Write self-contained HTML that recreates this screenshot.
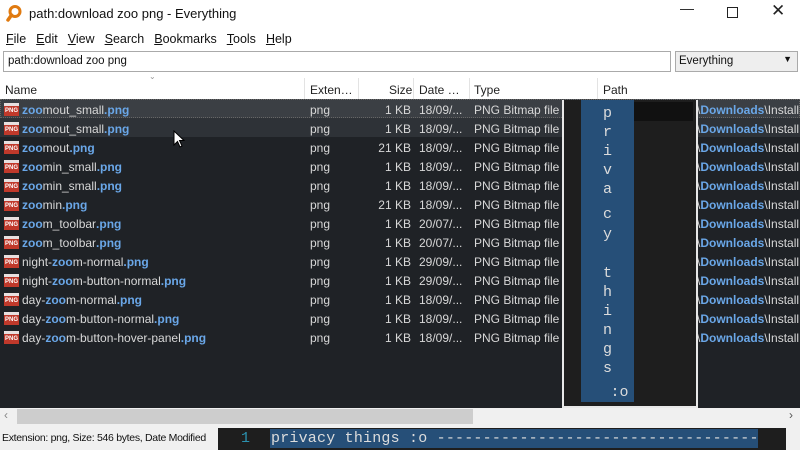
<!DOCTYPE html>
<html><head><meta charset="utf-8"><style>
*{margin:0;padding:0;box-sizing:border-box}
body{width:800px;height:450px;overflow:hidden;background:#fff;font-family:"Liberation Sans",sans-serif;font-size:12px;position:relative}
.abs{position:absolute}
.row{position:absolute;left:0;width:800px;height:19px;color:#d8d8d8;white-space:nowrap}
.row span.c{position:absolute;top:3px}
b{color:#6aa7e8;font-weight:bold}
.ico{position:absolute;left:4px;top:3px;width:15px;height:13px;background:#c0392b;border-top:3px solid #e8e0e0;color:#fff;font-size:6px;font-weight:bold;line-height:10px;text-align:center}
.hd{position:absolute;top:83px;color:#222}
.sep{position:absolute;top:78px;width:1px;height:21px;background:#e3e3e3}
.vl{position:absolute;left:581px;width:53px;text-align:center;font-family:"Liberation Mono",monospace;font-size:15px;color:#dcdcdc}
</style></head><body>
<svg class="abs" style="left:6px;top:5px" width="16" height="17" viewBox="0 0 16 17"><circle cx="9" cy="6.5" r="5" fill="none" stroke="#e07a10" stroke-width="3"/><line x1="5.5" y1="10" x2="2" y2="15" stroke="#e07a10" stroke-width="3.5" stroke-linecap="round"/></svg>
<div class="abs" style="left:29px;top:6px;font-size:13px;color:#111">path:download zoo png - Everything</div>
<div class="abs" style="left:680px;top:0;font-size:14px;color:#222">—</div>
<div class="abs" style="left:727px;top:7px;width:11px;height:11px;border:1px solid #222"></div>
<div class="abs" style="left:771px;top:1px;font-size:17px;color:#222">✕</div>
<div class="abs" style="top:32px;left:6px;font-size:12.5px;color:#111;word-spacing:0">
<span style="margin-right:10px"><u>F</u>ile</span><span style="margin-right:10px"><u>E</u>dit</span><span style="margin-right:10px"><u>V</u>iew</span><span style="margin-right:10px"><u>S</u>earch</span><span style="margin-right:10px"><u>B</u>ookmarks</span><span style="margin-right:10px"><u>T</u>ools</span><span><u>H</u>elp</span></div>
<div class="abs" style="left:3px;top:51px;width:668px;height:21px;border:1px solid #aaa;padding:3px 4px;font-size:11.5px;color:#111">path:download zoo png</div>
<div class="abs" style="left:675px;top:51px;width:123px;height:21px;border:1px solid #aaa;background:#eee;padding:3px 3px;font-size:11.5px;color:#111">Everything<span style="position:absolute;right:5px;top:2px;font-size:9px">▼</span></div>
<div class="abs" style="left:149px;top:72px;font-size:8px;color:#999">⌄</div>
<div class="hd" style="left:5px">Name</div>
<div class="hd" style="left:310px">Exten…</div>
<div class="hd" style="left:389px">Size</div>
<div class="hd" style="left:419px">Date …</div>
<div class="hd" style="left:474px">Type</div>
<div class="hd" style="left:603px">Path</div>
<div class="sep" style="left:304px"></div><div class="sep" style="left:358px"></div><div class="sep" style="left:413px"></div><div class="sep" style="left:469px"></div><div class="sep" style="left:597px"></div>
<div class="abs" style="left:0;top:99px;width:800px;height:309px;background:#1f2226"></div>
<div class="abs" style="left:0;top:99px;width:800px;height:19px;background:#3b3f44;border:1px dotted #666"></div>
<div class="abs" style="left:0;top:118px;width:800px;height:19px;background:#2e3237"></div>
<div id="rows"></div>
<script>
var n=[["<b>zoo</b>mout_small<b>.png</b>",1,"18/09"],["<b>zoo</b>mout_small<b>.png</b>",1,"18/09"],["<b>zoo</b>mout<b>.png</b>",21,"18/09"],["<b>zoo</b>min_small<b>.png</b>",1,"18/09"],["<b>zoo</b>min_small<b>.png</b>",1,"18/09"],["<b>zoo</b>min<b>.png</b>",21,"18/09"],["<b>zoo</b>m_toolbar<b>.png</b>",1,"20/07"],["<b>zoo</b>m_toolbar<b>.png</b>",1,"20/07"],["night-<b>zoo</b>m-normal<b>.png</b>",1,"29/09"],["night-<b>zoo</b>m-button-normal<b>.png</b>",1,"29/09"],["day-<b>zoo</b>m-normal<b>.png</b>",1,"18/09"],["day-<b>zoo</b>m-button-normal<b>.png</b>",1,"18/09"],["day-<b>zoo</b>m-button-hover-panel<b>.png</b>",1,"18/09"]];
var h="";n.forEach(function(r,i){var y=100+i*19;h+='<div class="row" style="top:'+y+'px"><div class="ico">PNG</div><span class="c" style="left:22px">'+r[0]+'</span><span class="c" style="left:310px">png</span><span class="c" style="right:389px">'+r[1]+' KB</span><span class="c" style="left:419px">'+r[2]+'/...</span><span class="c" style="left:474px">PNG Bitmap file</span><span class="c" style="left:697px">\\<b>Downloads</b>\\Install</span></div>';});
document.getElementById("rows").innerHTML=h;
</script>
<div class="abs" style="left:562px;top:100px;width:136px;height:308px;background:#1e1e1e;border:2px solid #e8e8e8;border-top:none"></div>
<div class="abs" style="left:581px;top:100px;width:53px;height:302px;background:#264f78"></div>
<div class="abs" style="left:634px;top:102px;width:59px;height:19px;background:#111"></div>
<div class="vl" style="top:105px">p</div><div class="vl" style="top:124px">r</div><div class="vl" style="top:143px">i</div><div class="vl" style="top:162px">v</div><div class="vl" style="top:181px">a</div><div class="vl" style="top:206px">c</div><div class="vl" style="top:226px">y</div>
<div class="vl" style="top:265px">t</div><div class="vl" style="top:284px">h</div><div class="vl" style="top:303px">i</div><div class="vl" style="top:322px">n</div><div class="vl" style="top:341px">g</div><div class="vl" style="top:360px">s</div><div class="vl" style="top:384px;padding-left:24px">:o</div>
<svg class="abs" style="left:173px;top:130px" width="12" height="18"><path d="M1 1 L1 15 L4.5 11.5 L7 17 L9 16 L6.5 10.5 L11 10.5 Z" fill="#fff" stroke="#000" stroke-width="1"/></svg>
<div class="abs" style="left:0;top:408px;width:800px;height:17px;background:#f0f0f0"></div>
<div class="abs" style="left:17px;top:409px;width:456px;height:15px;background:#cdcdcd"></div>
<div class="abs" style="left:4px;top:408px;color:#888;font-size:12px">‹</div>
<div class="abs" style="left:789px;top:408px;color:#555;font-size:12px">›</div>
<div class="abs" style="left:0;top:425px;width:800px;height:25px;background:#f0f0f0"></div>
<div class="abs" style="left:2px;top:432px;font-size:10.5px;color:#111;letter-spacing:-0.3px;width:216px;overflow:hidden;white-space:nowrap">Extension: png, Size: 546 bytes, Date Modified</div>
<div class="abs" style="left:218px;top:428px;width:568px;height:22px;background:#1e1e1e"></div>
<div class="abs" style="left:270px;top:429px;width:488px;height:19px;background:#264f78"></div>
<div class="abs" style="left:241px;top:430px;font-family:'Liberation Mono',monospace;font-size:15px;color:#2b91af">1</div>
<div class="abs" style="left:271px;top:430px;font-family:'Liberation Mono',monospace;font-size:15px;color:#dcdcdc;white-space:nowrap;letter-spacing:0.2px">privacy things :o -----------------------------------</div>
</body></html>
